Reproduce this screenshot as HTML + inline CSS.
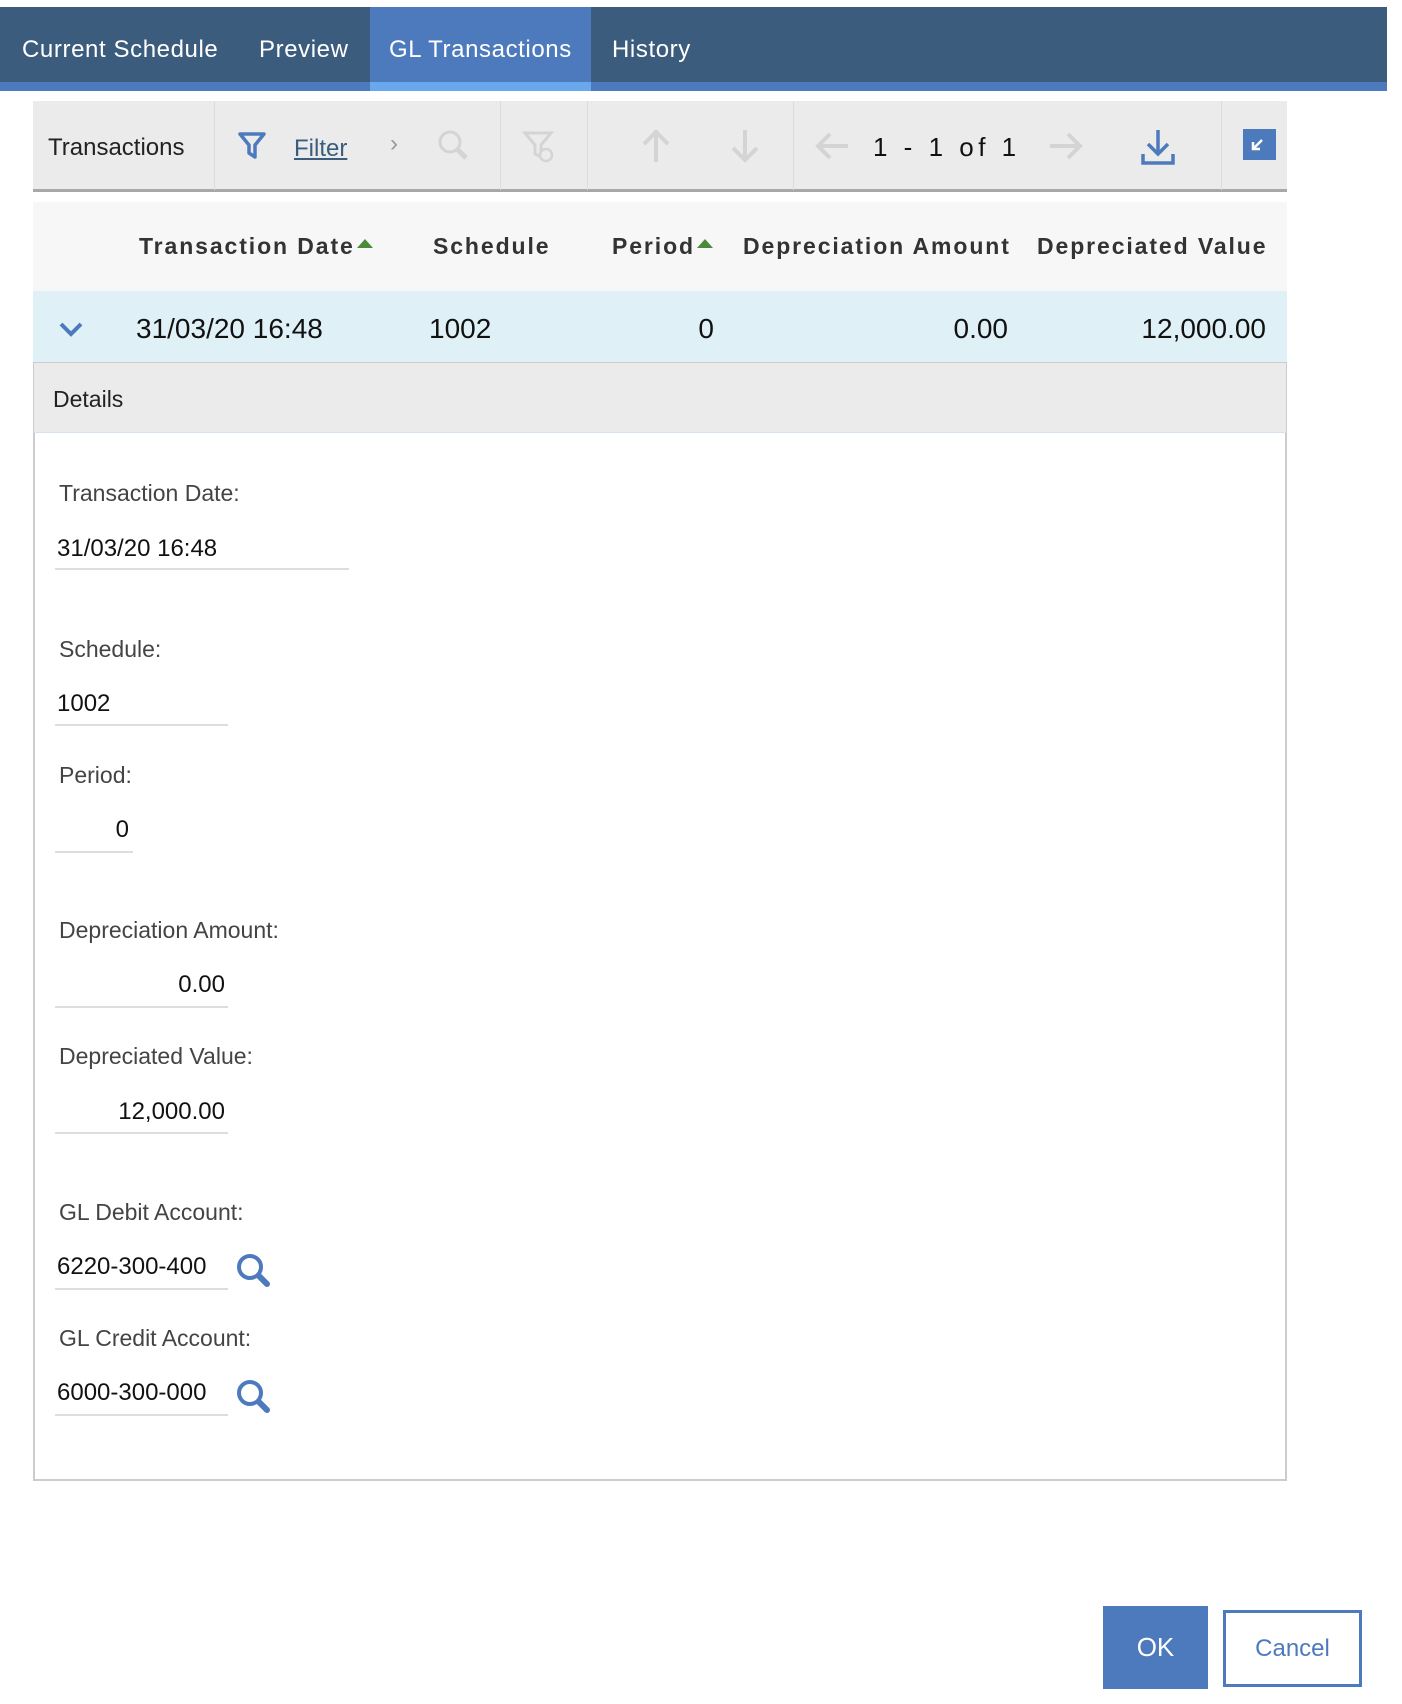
<!DOCTYPE html>
<html><head><meta charset="utf-8"><style>
*{margin:0;padding:0;box-sizing:border-box}
body{width:1402px;height:1704px;background:#fff;font-family:"Liberation Sans",sans-serif;position:relative;overflow:hidden;color:#000}
.a{position:absolute;white-space:nowrap}
.tab{position:absolute;top:7px;height:84px;color:#fff;font-size:24px;letter-spacing:0.6px;line-height:86px}
.sep{position:absolute;top:101px;width:1px;height:89px;background:#dcdcdc}
.hd{position:absolute;top:233px;font-size:23px;font-weight:bold;color:#333;letter-spacing:1.9px}
.rv{position:absolute;top:313px;font-size:28px;color:#111}
.lb{position:absolute;left:59px;font-size:23px;color:#444}
.val{position:absolute;font-size:24px;color:#111}
.ul{position:absolute;left:55px;height:2px;background:#ddd}
.tri{display:inline-block;width:0;height:0;border-left:8px solid transparent;border-right:8px solid transparent;border-bottom:9px solid #4a8a3a;vertical-align:top;margin-top:6px;margin-left:2px}
</style></head><body>
<div class="a" style="left:0;top:7px;width:1387px;height:84px;background:#3c5c7e"></div>
<div class="a" style="left:0;top:82px;width:1387px;height:9px;background:#4d7abd"></div>
<div class="a" style="left:370px;top:7px;width:221px;height:84px;background:#4d7abd"></div>
<div class="a" style="left:370px;top:82px;width:221px;height:9px;background:#6aa8ee"></div>
<div class="tab" style="left:22px">Current Schedule</div>
<div class="tab" style="left:259px">Preview</div>
<div class="tab" style="left:389px">GL Transactions</div>
<div class="tab" style="left:612px">History</div>

<div class="a" style="left:33px;top:101px;width:1254px;height:91px;background:#ebebeb;border-bottom:3px solid #a8a8a8"></div>
<div class="sep" style="left:214px"></div><div class="sep" style="left:500px"></div><div class="sep" style="left:587px"></div><div class="sep" style="left:793px"></div><div class="sep" style="left:1221px"></div>
<div class="a" style="left:48px;top:134px;font-size:24px;color:#222">Transactions</div>
<svg class="a" style="left:238px;top:131px" width="28" height="30" viewBox="0 0 28 30"><path d="M2 3h24l-9 11v12l-6-4v-8z" fill="none" stroke="#4d7abd" stroke-width="3.5" stroke-linejoin="round"/></svg>
<div class="a" style="left:294px;top:135px;font-size:24px;color:#3c5c7e;text-decoration:underline">Filter</div>
<div class="a" style="left:390px;top:130px;font-size:24px;color:#999">›</div>
<svg class="a" style="left:436px;top:128px" width="36" height="36"><circle cx="14" cy="14" r="10" fill="none" stroke="#d4d4d4" stroke-width="3"/><path d="M21 21l9 9" stroke="#d4d4d4" stroke-width="5"/></svg>
<svg class="a" style="left:522px;top:130px" width="34" height="34"><path d="M3 3h26l-10 12v12l-6-3v-9z" fill="none" stroke="#d4d4d4" stroke-width="3"/><circle cx="24" cy="25" r="6" fill="#ebebeb" stroke="#d4d4d4" stroke-width="2.5"/></svg>
<svg class="a" style="left:640px;top:128px" width="32" height="36"><path d="M16 34V4M4 16L16 4l12 12" fill="none" stroke="#d4d4d4" stroke-width="4"/></svg>
<svg class="a" style="left:729px;top:128px" width="32" height="36"><path d="M16 2v30M4 20l12 12 12-12" fill="none" stroke="#d4d4d4" stroke-width="4"/></svg>
<svg class="a" style="left:814px;top:130px" width="36" height="32"><path d="M34 16H4M16 4L4 16l12 12" fill="none" stroke="#d4d4d4" stroke-width="4"/></svg>
<div class="a" style="left:873px;top:132px;font-size:26px;color:#111;letter-spacing:4.5px">1 - 1 of 1</div>
<svg class="a" style="left:1048px;top:130px" width="36" height="32"><path d="M2 16h30M20 4l12 12-12 12" fill="none" stroke="#d4d4d4" stroke-width="4"/></svg>
<svg class="a" style="left:1140px;top:128px" width="36" height="38"><path d="M18 2v24M8 16l10 10 10-10M3 26v9h30v-9" fill="none" stroke="#4d7abd" stroke-width="3.5"/></svg>
<div class="a" style="left:1243px;top:129px;width:33px;height:31px;background:#4d7abd"></div>
<svg class="a" style="left:1249px;top:137px" width="16" height="16"><path d="M13 3L4 12M4 5v7h7" fill="none" stroke="#fff" stroke-width="2.5"/></svg>

<div class="a" style="left:33px;top:202px;width:1254px;height:89px;background:#f7f7f7"></div>
<div class="hd" style="left:139px">Transaction Date<span class="tri"></span></div>
<div class="hd" style="left:433px">Schedule</div>
<div class="hd" style="left:612px">Period<span class="tri"></span></div>
<div class="hd" style="left:743px">Depreciation Amount</div>
<div class="hd" style="left:1037px">Depreciated Value</div>

<div class="a" style="left:33px;top:291px;width:1254px;height:71px;background:#e0f0f7"></div>
<svg class="a" style="left:58px;top:320px" width="26" height="18"><path d="M3 4l10 10 10-10" fill="none" stroke="#4d7abd" stroke-width="4"/></svg>
<div class="rv" style="left:136px">31/03/20 16:48</div>
<div class="rv" style="left:429px">1002</div>
<div class="rv" style="left:600px;width:114px;text-align:right">0</div>
<div class="rv" style="left:800px;width:208px;text-align:right">0.00</div>
<div class="rv" style="left:1060px;width:206px;text-align:right">12,000.00</div>

<div class="a" style="left:33px;top:362px;width:1254px;height:1119px;border:2px solid #ccc;border-top:1px solid #ccc"></div>
<div class="a" style="left:34px;top:363px;width:1252px;height:70px;background:#ebebeb;border-bottom:1px solid #d6e2ee"></div>
<div class="a" style="left:53px;top:386px;font-size:23px;color:#222">Details</div>

<div class="lb" style="top:480px">Transaction Date:</div>
<div class="val" style="left:57px;top:535px">31/03/20 16:48</div>
<div class="ul" style="top:568px;width:294px"></div>
<div class="lb" style="top:636px">Schedule:</div>
<div class="val" style="left:57px;top:690px">1002</div>
<div class="ul" style="top:724px;width:173px"></div>
<div class="lb" style="top:762px">Period:</div>
<div class="val" style="left:57px;top:816px;width:72px;text-align:right">0</div>
<div class="ul" style="top:851px;width:78px"></div>
<div class="lb" style="top:917px">Depreciation Amount:</div>
<div class="val" style="left:57px;top:971px;width:168px;text-align:right">0.00</div>
<div class="ul" style="top:1006px;width:173px"></div>
<div class="lb" style="top:1043px">Depreciated Value:</div>
<div class="val" style="left:57px;top:1098px;width:168px;text-align:right">12,000.00</div>
<div class="ul" style="top:1132px;width:173px"></div>
<div class="lb" style="top:1199px">GL Debit Account:</div>
<div class="val" style="left:57px;top:1253px">6220-300-400</div>
<div class="ul" style="top:1288px;width:173px"></div>
<svg class="a" style="left:235px;top:1252px" width="40" height="40"><circle cx="15" cy="15" r="11" fill="none" stroke="#4d7abd" stroke-width="4"/><path d="M24 24l8 8" stroke="#4d7abd" stroke-width="6" stroke-linecap="round"/></svg>
<div class="lb" style="top:1325px">GL Credit Account:</div>
<div class="val" style="left:57px;top:1379px">6000-300-000</div>
<div class="ul" style="top:1414px;width:173px"></div>
<svg class="a" style="left:235px;top:1378px" width="40" height="40"><circle cx="15" cy="15" r="11" fill="none" stroke="#4d7abd" stroke-width="4"/><path d="M24 24l8 8" stroke="#4d7abd" stroke-width="6" stroke-linecap="round"/></svg>

<div class="a" style="left:1103px;top:1606px;width:105px;height:83px;background:#4d7abd;color:#fff;font-size:26px;text-align:center;line-height:83px">OK</div>
<div class="a" style="left:1223px;top:1610px;width:139px;height:77px;border:3px solid #4d7abd;color:#4d7abd;font-size:24px;text-align:center;line-height:71px">Cancel</div>
</body></html>
